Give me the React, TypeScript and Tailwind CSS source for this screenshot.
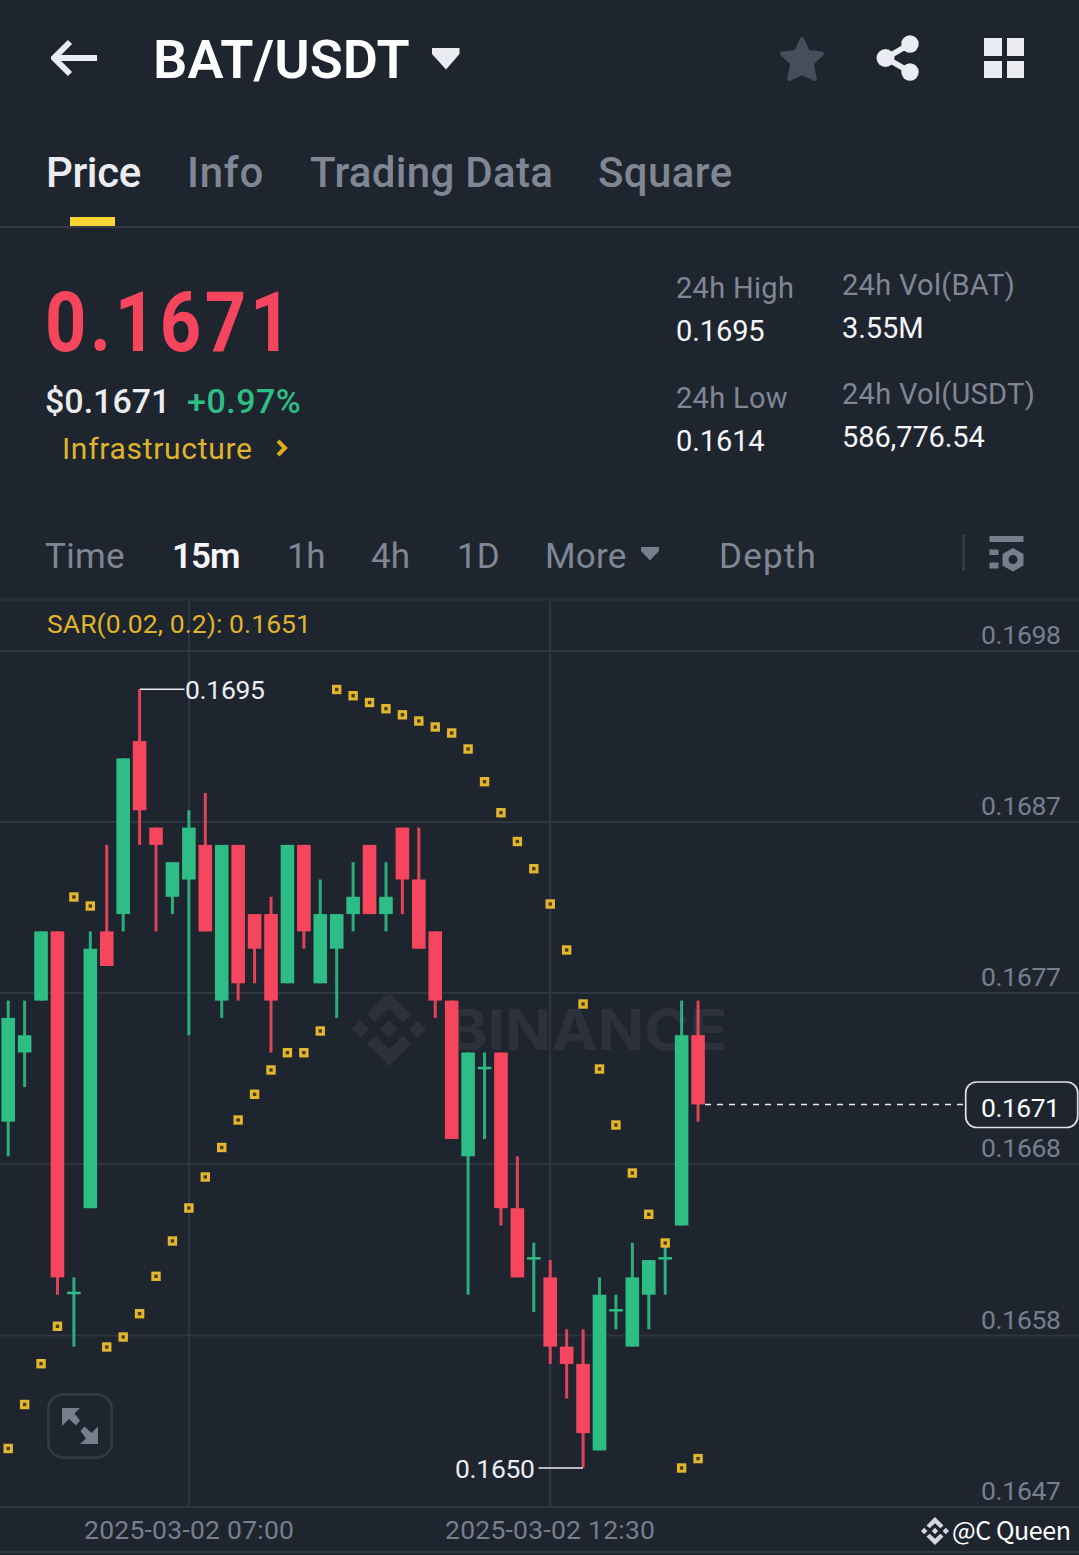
type Candle = [high: number, top: number, bottom: number, low: number, up: boolean];

// ticks of 0.0001 below the 0.1695 high
const candles: Candle[] = [
  [18, 19, 25, 27, true],
  [18, 20, 21, 23, true],
  [14, 14, 18, 18, true],
  [14, 14, 34, 35, false],
  [34, 35, 35, 38, true],
  [14, 15, 30, 30, true],
  [9, 14, 16, 16, false],
  [4, 4, 13, 14, true],
  [0, 3, 7, 9, false],
  [8, 8, 9, 14, false],
  [10, 10, 12, 13, true],
  [7, 8, 11, 20, true],
  [6, 9, 14, 14, false],
  [9, 9, 18, 19, true],
  [9, 9, 17, 18, false],
  [13, 13, 15, 17, false],
  [12, 13, 18, 21, false],
  [9, 9, 17, 17, true],
  [9, 9, 14, 15, false],
  [11, 13, 17, 17, true],
  [13, 13, 15, 19, true],
  [10, 12, 13, 14, true],
  [9, 9, 13, 13, false],
  [10, 12, 13, 14, true],
  [8, 8, 11, 13, false],
  [8, 11, 15, 15, false],
  [14, 14, 18, 19, false],
  [18, 18, 26, 26, false],
  [21, 21, 27, 35, true],
  [21, 22, 22, 26, true],
  [21, 21, 30, 31, false],
  [27, 30, 34, 34, false],
  [32, 33, 33, 36, true],
  [33, 34, 38, 39, false],
  [37, 38, 39, 41, false],
  [37, 39, 43, 45, false],
  [34, 35, 44, 44, true],
  [35, 36, 36, 37, true],
  [32, 34, 38, 38, true],
  [33, 33, 35, 37, true],
  [32, 33, 33, 35, true],
  [18, 20, 31, 31, true],
  [18, 20, 24, 25, false],
];

const sar = [
  1448.5, 1404.5, 1363.7, 1326.3, 897, 906, 1347, 1337, 1313.7, 1276.3, 1241, 1208, 1177, 1147.5,
  1120, 1094.3, 1070, 1052.7, 1052.7, 1031, 689.5, 695.7, 702.5, 708.7, 714.8, 721, 727, 733, 749,
  781.7, 812.7, 841.5, 868.7, 904, 950, 1004, 1069, 1125, 1173, 1214.3, 1243, 1468, 1458.6,
];

const axis = [
  { label: '0.1698', y: 651 },
  { label: '0.1687', y: 822 },
  { label: '0.1677', y: 993 },
  { label: '0.1668', y: 1164 },
  { label: '0.1658', y: 1335.5 },
  { label: '0.1647', y: 1507 },
];

const tabs = [
  { label: 'Price', cls: 'w-[141px] tracking-[-0.4px] text-[#eaecef]' },
  { label: 'Info', cls: 'w-[123px] tracking-[0.8px]' },
  { label: 'Trading Data', cls: 'w-[288px] tracking-[0.3px]' },
  { label: 'Square', cls: 'w-[140px] tracking-[0.4px]' },
];

const cx = (i: number) => 8.2 + i * 16.425;
const cy = (tick: number) => 689.2 + tick * 17.3;

export default function App() {
  return (
    <div className="flex h-[1555px] w-[1079px] flex-col overflow-hidden bg-[#1f252f] font-['Roboto',sans-serif] text-[#808694]">
      <Header />
      <Tabs />
      <Ticker />
      <Intervals />
      <Chart />
    </div>
  );
}

function Header() {
  return (
    <header className="flex h-[120px] shrink-0 items-center">
      <svg className="ml-[51px] mb-1 h-10 w-12" viewBox="0 0 48 40" fill="none" stroke="#eaecf2" strokeWidth="6">
        <path d="M46 20H4M19 4L3 20L19 36" />
      </svg>
      <h1 className="ml-[54px] w-[261px] whitespace-nowrap text-[54px] font-semibold leading-none tracking-[0.1px] text-white">
        BAT/USDT
      </h1>
      <svg className="ml-[18px] mb-0.5 h-[22px] w-7" viewBox="0 0 28 22" fill="#eaecf2">
        <path d="M0 0H27.500V6L14 21.500L0 6Z" />
      </svg>
      <svg className="ml-[319px] h-[46px] w-[46px]" viewBox="0 0 46 46" fill="#474d5b" stroke="#474d5b" strokeWidth="4" strokeLinejoin="round">
        <path d="M23 2L29 15L43 16.500L32.700 26.500L35.700 42L23 36L10.300 42L13.300 26.500L3 16.500L17 15Z" />
      </svg>
      <svg className="ml-[51px] mb-1 h-[46px] w-11" viewBox="0 0 44 46" fill="#eaecf2">
        <path d="M34 9L10 23L34 37" fill="none" stroke="#eaecf2" strokeWidth="5.500" />
        <circle cx="34" cy="9" r="8.700" />
        <circle cx="9.500" cy="23" r="9" />
        <circle cx="34" cy="37" r="8.700" />
      </svg>
      <div className="ml-[64px] mb-1 grid grid-cols-2 gap-x-[5px] gap-y-[5px]">
        <span className="h-[17.500px] w-[17.500px] bg-[#eaecf2]" />
        <span className="h-[17.500px] w-[17.500px] bg-[#eaecf2]" />
        <span className="h-[17.500px] w-[17.500px] bg-[#eaecf2]" />
        <span className="h-[17.500px] w-[17.500px] bg-[#eaecf2]" />
      </div>
    </header>
  );
}

function Tabs() {
  return (
    <nav className="flex h-[108px] shrink-0 flex-col border-b-2 border-[#333945]">
      <div className="flex h-[97px] items-center pl-[46px] pb-0 pt-2 text-[42px] font-medium leading-none">
        {tabs.map((t) => (
          <span key={t.label} className={`whitespace-nowrap ${t.cls}`}>
            {t.label}
          </span>
        ))}
      </div>
      <div className="ml-[70px] h-[9px] w-[45px] bg-[#fcd535]" />
    </nav>
  );
}

function Stat({ label, value }: { label: string; value: string }) {
  return (
    <div className="h-[109.500px] whitespace-nowrap">
      <div className="h-[43px] text-[29px] leading-[34px] tracking-[0.3px]">{label}</div>
      <div className="text-[29px] leading-[34px] tracking-[-0.1px] text-[#f5f6f9]">{value}</div>
    </div>
  );
}

function Ticker() {
  return (
    <section className="flex h-[284px] shrink-0">
      <div className="w-[676px] pl-[45px] pt-[51px]">
        <div className="origin-left scale-x-[0.87] text-[83px] font-bold leading-[88px] tracking-[4.2px] text-[#f6465d]">
          0.1671
        </div>
        <div className="mt-[16px] flex text-[34px] font-medium leading-[36px]">
          <span className="w-[142px] text-[#eaecef]">$0.1671</span>
          <span className="tracking-[0.5px] text-[#2ebd85]">+0.97%</span>
        </div>
        <div className="mt-[12px] flex items-center pl-[17px] text-[30px] leading-[36px] tracking-[0.7px] text-[#dfb42c]">
          Infrastructure
          <svg className="mb-0.5 ml-[23px] h-[18px] w-3" viewBox="0 0 12 18" fill="none" stroke="#dfa920" strokeWidth="4">
            <path d="M2 2L9 9L2 16" />
          </svg>
        </div>
      </div>
      <div className="w-[166px] pt-[43px]">
        <Stat label="24h High" value="0.1695" />
        <Stat label="24h Low" value="0.1614" />
      </div>
      <div className="pt-[39.500px]">
        <Stat label="24h Vol(BAT)" value="3.55M" />
        <Stat label="24h Vol(USDT)" value="586,776.54" />
      </div>
    </section>
  );
}

function Intervals() {
  return (
    <div className="flex h-[89px] shrink-0 items-center whitespace-nowrap border-b-[3px] border-[#282e39] pl-[45px] pt-[2px] text-[35px] leading-none">
      <span className="w-[127px] tracking-[0.3px]">Time</span>
      <span className="w-[115px] font-semibold tracking-[-1px] text-[#f5f6f9]">15m</span>
      <span className="w-[84px] tracking-[-0.5px]">1h</span>
      <span className="w-[86px]">4h</span>
      <span className="w-[88px]">1D</span>
      <span className="w-[96px] tracking-[0.2px]">More</span>
      <svg className="mb-1 h-[14px] w-[18px]" viewBox="0 0 18 14" fill="#777e8d">
        <path d="M0 0H18V4L9 13.500L0 4Z" />
      </svg>
      <span className="ml-[60px] w-[243px] tracking-[1.2px]">Depth</span>
      <span className="mb-1.5 h-9 w-[3px] bg-[#333945]" />
      <svg className="mb-1 ml-[24px] h-9 w-9" viewBox="0 0 36 36" fill="#777e8d">
        <path d="M0.500 0H34.500V6H0.500ZM0.500 13.500H9.500V19H0.500ZM0.500 26.500H9.500V32.500H0.500Z" />
        <path d="M24 12L34.500 18V29.500L24 35.500L13.500 29.500V18ZM24 19A4.500 4.500 0 1 0 24 28A4.500 4.500 0 1 0 24 19Z" fillRule="evenodd" />
      </svg>
    </div>
  );
}

function BinanceMark({ fill, x, y, size }: { fill: string; x: number; y: number; size: number }) {
  return (
    <svg x={x} y={y} width={size} height={size} viewBox="0 0 74 74" fill={fill}>
      <path d="M37 0L59.500 22.500L51 30L37 16.500L23 30L14.500 22.500Z" />
      <path d="M37 74L59.500 51.500L51 44L37 57.500L23 44L14.500 51.500Z" />
      <path d="M8.500 28.500L17 37L8.500 45.500L0 37ZM65.500 28.500L74 37L65.500 45.500L57 37ZM37 28.500L45.500 37L37 45.500L28.500 37Z" />
    </svg>
  );
}

function Chart() {
  return (
    <svg className="block h-[954px] w-[1079px] shrink-0" viewBox="0 601 1079 954">
      <g stroke="#2f3541" strokeWidth="2">
        {axis.map((a) => (
          <line key={a.label} x1="0" x2="1079" y1={a.y} y2={a.y} />
        ))}
        <line x1="189" x2="189" y1="600" y2="1507" />
        <line x1="550" x2="550" y1="600" y2="1507" />
        <line x1="0" x2="1079" y1="1552" y2="1552" />
      </g>

      <BinanceMark fill="#2d313c" x={352} y={992} size={74} />
      <text
        x="447"
        y="1049.500"
        textLength="280"
        lengthAdjust="spacingAndGlyphs"
        className="fill-[#2d313c] font-['Inter',sans-serif] text-[57px] font-bold"
      >
        BINANCE
      </text>

      {candles.map(([high, top, bottom, low, up], i) => {
        const doji = top === bottom;
        return (
          <g key={i} className={up ? 'fill-[#2ebd85]' : 'fill-[#f6465d]'}>
            <rect x={cx(i) - 1.5} y={cy(high)} width="3" height={cy(low) - cy(high)} opacity="0.9" />
            <rect
              x={cx(i) - 6.8}
              y={doji ? cy(top) - 3 : cy(top)}
              width="13.600"
              height={doji ? 2.5 : cy(bottom) - cy(top)}
            />
          </g>
        );
      })}

      {sar.map((y, i) => (
        <rect key={i} x={cx(i) - 3.2} y={y - 3.2} width="6.400" height="6.400" fill="#4a3c12" stroke="#e2b62f" strokeWidth="3" />
      ))}

      <path d="M140 689.300H184.500M538.500 1468H583" stroke="#eaecf2" strokeWidth="1.500" />
      <g className="fill-[#eaecf2] text-[26.5px]">
        <text x="185" y="699.400" textLength="80">0.1695</text>
        <text x="455" y="1478.400" textLength="80">0.1650</text>
      </g>
      <text x="47" y="633.400" textLength="264" className="fill-[#dfb42c] text-[26.5px]">
        SAR(0.02, 0.2): 0.1651
      </text>

      <g className="fill-[#777e8d] text-[26.5px]">
        {axis.map((a) => (
          <text key={a.label} x="981" y={a.y - 6.6} textLength="80">
            {a.label}
          </text>
        ))}
        <text x="84" y="1539.400" textLength="210">2025-03-02 07:00</text>
        <text x="445" y="1539.400" textLength="210">2025-03-02 12:30</text>
      </g>

      <line x1="705" x2="965" y1="1104.500" y2="1104.500" stroke="#eaecf2" strokeWidth="1.500" strokeDasharray="6 6" />
      <rect x="965.700" y="1082" width="112" height="45.500" rx="11" fill="#1f252f" stroke="#dfe1e8" strokeWidth="1.700" />
      <text x="981" y="1117.400" textLength="79" className="fill-white text-[26.5px]">
        0.1671
      </text>

      <rect x="48.300" y="1394.500" width="63.500" height="63" rx="15" fill="#1f252f" stroke="#333945" strokeWidth="2.600" />
      <path
        d="M62 1408H80L74.500 1413.500L80 1420.500L76 1425.500L69 1419L62 1426ZM98 1444H80L86 1438.500L80.500 1431L84.500 1426.500L91.500 1433L98 1426.500Z"
        fill="#777e8d"
      />

      <BinanceMark fill="#d5d7dc" x={921} y={1517} size={28} />
      <text x="952" y="1540" textLength="119" className="fill-white font-['Noto_Sans_CJK_SC',sans-serif] text-[25px] font-normal">
        @C Queen
      </text>
    </svg>
  );
}
